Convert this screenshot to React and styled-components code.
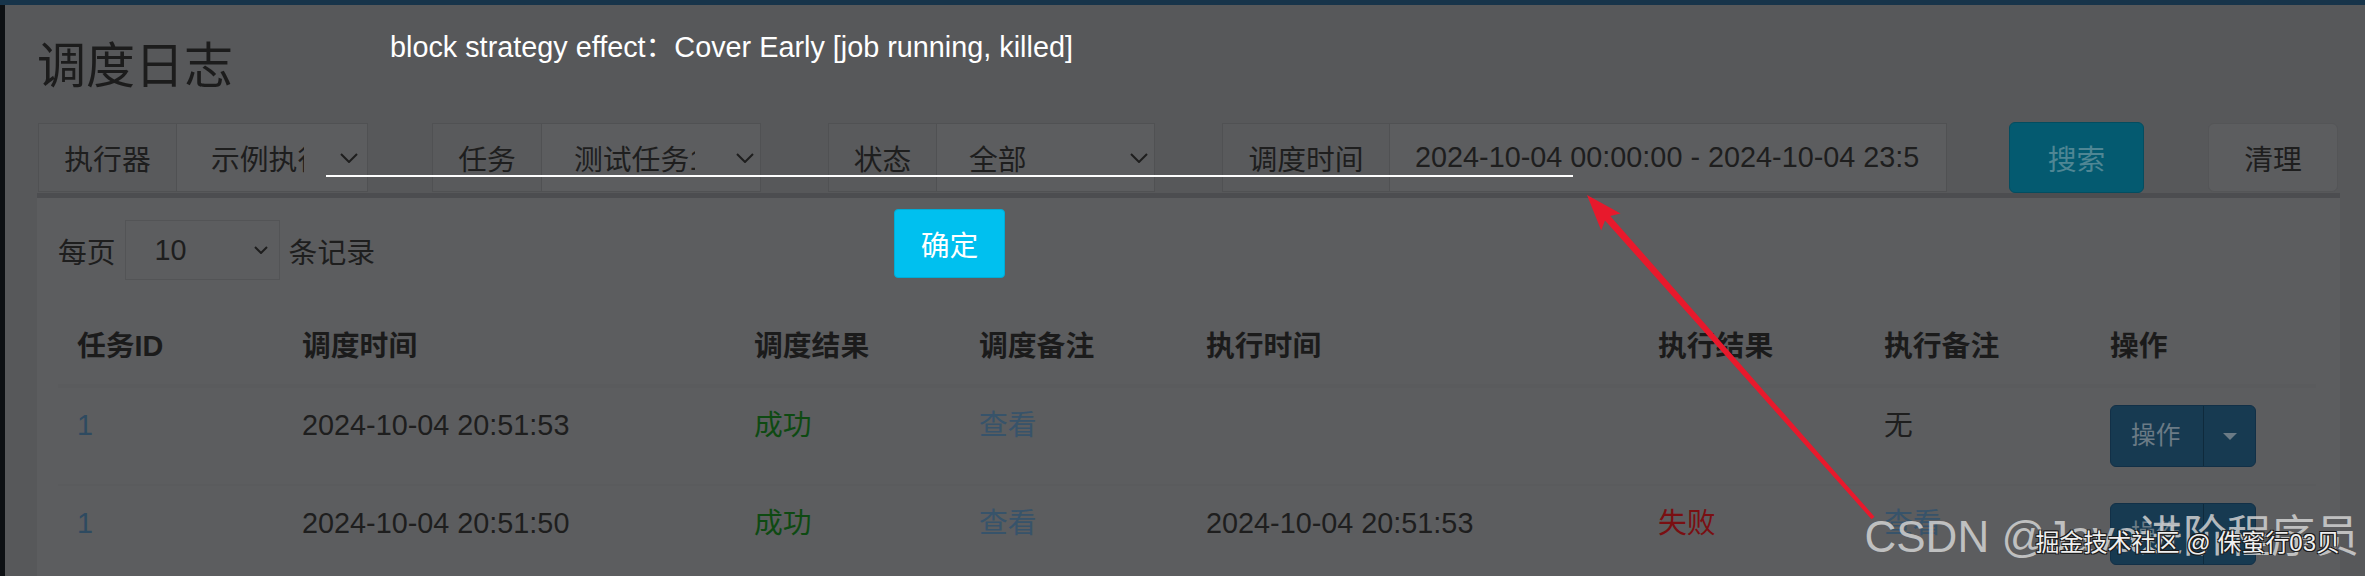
import React from "react";
import styled, { createGlobalStyle } from "styled-components";

const GlobalStyle = createGlobalStyle`
  html, body {
    margin: 0;
    padding: 0;
    overflow: hidden;
  }
  body {
    background: #57585a;
    font-family: "Liberation Sans", "Noto Sans CJK SC", sans-serif;
    font-size: 28.8px;
    color: #1e1e1e;
  }
`;

const Page = styled.div`
  position: relative;
  width: 2365px;
  height: 576px;
  overflow: hidden;
  display: flex;
  flex-direction: column;
`;
const TopBar = styled.div`
  height: 5px;
  flex-shrink: 0;
  background: #17344a;
`;
const Main = styled.div`
  flex: 1;
  display: flex;
`;
const Sidebar = styled.div`
  width: 5px;
  flex-shrink: 0;
  background: #0d1013;
`;
const Content = styled.div`
  flex: 1;
  padding: 34px 25px 0 32px;
`;
const Title = styled.h1`
  margin: 0;
  font-size: 49px;
  line-height: 54px;
  font-weight: 400;
  color: #1c1c1c;
`;

/* filter bar */
const FilterRow = styled.div`
  margin-top: 30px;
  height: 69px;
  display: flex;
  align-items: center;
`;
const Group = styled.div`
  display: flex;
  height: 69px;
  width: ${(p) => p.$w}px;
  margin-left: ${(p) => p.$ml}px;
  box-sizing: border-box;
`;
const Addon = styled.div`
  width: ${(p) => p.$w}px;
  flex-shrink: 0;
  box-sizing: border-box;
  background: #595a5c;
  border: 1px solid #505153;
  display: flex;
  align-items: center;
  justify-content: center;
  white-space: nowrap;
`;
const Field = styled.div`
  flex: 1;
  box-sizing: border-box;
  background: #5c5d5f;
  border: 1px solid #505153;
  border-left: 0;
  display: flex;
  align-items: center;
  padding-left: ${(p) => p.$pl}px;
`;
const Value = styled.div`
  width: ${(p) => p.$w}px;
  overflow: hidden;
  white-space: nowrap;
`;
const Chevron = styled.svg`
  margin-left: auto;
  flex-shrink: 0;
`;
const Button = styled.button`
  height: ${(p) => p.$h}px;
  width: ${(p) => p.$w}px;
  margin-left: ${(p) => p.$ml}px;
  border-radius: 6px;
  font-family: inherit;
  font-size: 28.8px;
  padding: 0;
  background: ${(p) => (p.$primary ? "#045a70" : "#5c5d5f")};
  border: 1px solid ${(p) => (p.$primary ? "#034d60" : "#545557")};
  color: ${(p) => (p.$primary ? "#4f8694" : "#1e1e1e")};
`;

/* table box */
const Box = styled.div`
  margin-top: 1px;
  border-top: 5px solid #4c4d50;
  background: #5c5d5f;
  padding: 21px;
  min-height: 400px;
`;
const LengthRow = styled.div`
  height: 62px;
  display: flex;
  align-items: center;
`;
const LengthSelect = styled.div`
  width: 155px;
  height: 60px;
  box-sizing: border-box;
  margin: 0 9px;
  border: 1px solid #535456;
  display: flex;
  align-items: center;
  padding: 0 11px 0 29px;
`;
const Table = styled.table`
  margin-top: 28px;
  border-collapse: collapse;
  table-layout: fixed;
  width: 2258px;
`;
const Th = styled.th`
  width: ${(p) => p.$w}px;
  box-sizing: border-box;
  text-align: left;
  font-weight: 700;
  padding: 17px 19px;
  line-height: 41px;
  color: #1b1b1b;
  border-bottom: 4px solid #5a5b5d;
  white-space: nowrap;
`;
const Td = styled.td`
  padding: 17px 19px;
  line-height: 41px;
  vertical-align: top;
  border-bottom: 2px solid #5a5b5d;
  white-space: nowrap;
  color: ${(p) =>
    ({ link: "#2e4a60", ok: "#0e4a12", fail: "#7a0f12", view: "#37536a" }[p.$tone] ||
    "#1e1e1e")};
`;
const OpButton = styled.div`
  display: inline-flex;
  width: 146px;
  height: 62px;
  box-sizing: border-box;
  border-radius: 6px;
  background: #173a51;
  border: 1px solid #123047;
  color: #6b7b86;
  font-size: 24.7px;
  line-height: 1;
  vertical-align: top;
`;
const OpLabel = styled.div`
  width: 93px;
  padding-left: 20px;
  box-sizing: border-box;
  display: flex;
  align-items: center;
  border-right: 1px solid #0f2a3c;
`;
const OpCaret = styled.div`
  flex: 1;
  display: flex;
  align-items: center;
  justify-content: center;
`;

/* layer on top of the dimmed page */
const Dialog = styled.div`
  position: absolute;
  left: 326px;
  top: 33px;
  width: 1247px;
`;
const Message = styled.div`
  height: 142px;
  padding-left: 64px;
  color: #fff;
  line-height: 1;
  border-bottom: 2px solid #fff;
  white-space: nowrap;
`;
const DialogFooter = styled.div`
  padding-top: 32px;
  display: flex;
  justify-content: center;
`;
const OkButton = styled.button`
  width: 111px;
  height: 69px;
  padding: 0;
  border-radius: 4px;
  background: #00c0ef;
  border: 1px solid #00acd6;
  color: #fff;
  font-family: inherit;
  font-size: 28.8px;
`;
const Annotation = styled.svg`
  position: absolute;
  left: 0;
  top: 0;
  pointer-events: none;
`;
const CsdnMark = styled.div`
  position: absolute;
  right: 6px;
  top: 515px;
  font-size: 44px;
  line-height: 1;
  color: rgba(215, 215, 215, 0.82);
  white-space: nowrap;
`;
const JuejinMark = styled.div`
  position: absolute;
  right: 25px;
  top: 531px;
  font-size: 24px;
  line-height: 1;
  color: #f0f0f0;
  white-space: nowrap;
  text-shadow: 1px 1px 0 #1a1a1a, -1px -1px 0 #1a1a1a, 1px -1px 0 #1a1a1a, -1px 1px 0 #1a1a1a;
`;

const Down = ({ w = 18, h = 10, mr = 0 }) => (
  <Chevron width={w} height={h} viewBox={`0 0 ${w} ${h}`} style={{ marginRight: mr }}>
    <polyline points={`1,1 ${w / 2},${h - 1} ${w - 1},1`} fill="none" stroke="#1e1e1e" strokeWidth="2" />
  </Chevron>
);

const filters = [
  { label: "执行器", lw: 139, w: 330, ml: 1, pl: 34, vw: 93, value: "示例执行器", mr: 9 },
  { label: "任务", lw: 110, w: 329, ml: 64, pl: 32, vw: 121, value: "测试任务1", mr: 6 },
  { label: "状态", lw: 109, w: 327, ml: 67, pl: 32, vw: 150, value: "全部", mr: 6 },
];

const columns = [
  ["任务ID", 225],
  ["调度时间", 452],
  ["调度结果", 225],
  ["调度备注", 227],
  ["执行时间", 452],
  ["执行结果", 226],
  ["执行备注", 226],
  ["操作", 225],
];

const rows = [
  { trigger: "2024-10-04 20:51:53", handle: "", result: "", note: "无", noteTone: "" },
  { trigger: "2024-10-04 20:51:50", handle: "2024-10-04 20:51:53", result: "失败", note: "查看", noteTone: "view" },
];

export default function App() {
  return (
    <Page>
      <GlobalStyle />
      <TopBar />
      <Main>
        <Sidebar />
        <Content>
          <Title>调度日志</Title>
          <FilterRow>
            {filters.map((f) => (
              <Group key={f.label} $w={f.w} $ml={f.ml}>
                <Addon $w={f.lw}>{f.label}</Addon>
                <Field $pl={f.pl}>
                  <Value $w={f.vw}>{f.value}</Value>
                  <Down mr={f.mr} />
                </Field>
              </Group>
            ))}
            <Group $w={725} $ml={67}>
              <Addon $w={168}>调度时间</Addon>
              <Field $pl={25}>
                <Value $w={505}>2024-10-04 00:00:00 - 2024-10-04 23:59:59</Value>
              </Field>
            </Group>
            <Button $primary $w={135} $h={71} $ml={62}>搜索</Button>
            <Button $w={130} $h={69} $ml={64}>清理</Button>
          </FilterRow>

          <Box>
            <LengthRow>
              每页
              <LengthSelect>
                <Value $w={60}>10</Value>
                <Down w={14} h={8} />
              </LengthSelect>
              条记录
            </LengthRow>
            <Table>
              <thead>
                <tr>
                  {columns.map(([name, w]) => (
                    <Th key={name} $w={w}>{name}</Th>
                  ))}
                </tr>
              </thead>
              <tbody>
                {rows.map((r) => (
                  <tr key={r.trigger}>
                    <Td $tone="link">1</Td>
                    <Td>{r.trigger}</Td>
                    <Td $tone="ok">成功</Td>
                    <Td $tone="view">查看</Td>
                    <Td>{r.handle}</Td>
                    <Td $tone="fail">{r.result}</Td>
                    <Td $tone={r.noteTone}>{r.note}</Td>
                    <Td>
                      <OpButton>
                        <OpLabel>操作</OpLabel>
                        <OpCaret>
                          <svg width="14" height="7" viewBox="0 0 14 7">
                            <polygon points="0,0 14,0 7,7" fill="#6b7b86" />
                          </svg>
                        </OpCaret>
                      </OpButton>
                    </Td>
                  </tr>
                ))}
              </tbody>
            </Table>
          </Box>
        </Content>
      </Main>

      <Dialog>
        <Message>block strategy effect：Cover Early [job running, killed]</Message>
        <DialogFooter>
          <OkButton>确定</OkButton>
        </DialogFooter>
      </Dialog>

      <Annotation width="2365" height="576" viewBox="0 0 2365 576">
        <polygon
          points="1587,195 1620.6,213.4 1610.2,215.9 1874.5,516.7 1871.5,519.3 1605,220.5 1601.2,230.6"
          fill="#e8192c"
        />
      </Annotation>

      <CsdnMark>CSDN @Java进阶程序员</CsdnMark>
      <JuejinMark>掘金技术社区 @ 侏蜜行03贝</JuejinMark>
    </Page>
  );
}
